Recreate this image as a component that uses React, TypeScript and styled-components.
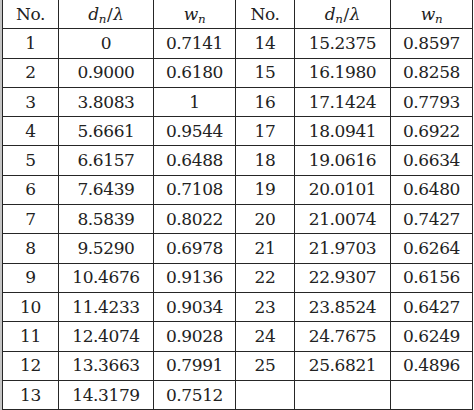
import styled, { createGlobalStyle } from 'styled-components';

const GlobalStyle = createGlobalStyle`
  html, body {
    margin: 0;
    padding: 0;
    background: #ffffff;
    overflow: hidden;
  }
`;

const Page = styled.div`
  width: 474px;
  height: 410px;
  overflow: hidden;
  box-sizing: border-box;
  border-left: 2px solid #c4c4c4;
`;

const Table = styled.table`
  border-collapse: collapse;
  table-layout: fixed;
  width: 471px;
  margin-top: -1px;
  font-family: 'DejaVu Serif', serif;
  font-size: 17px;
  letter-spacing: -0.4px;
  color: #222222;
`;

const Row = styled.tr`
  height: 29.3px;
`;

const Cell = styled.td`
  border: 1px solid #262626;
  padding: 0;
  text-align: center;
  vertical-align: middle;
  line-height: 1;
  white-space: nowrap;
`;

const Head = styled(Cell).attrs({ as: 'th' })`
  font-weight: normal;
`;

const Var = styled.i`
  font-style: italic;
`;

const Slash = styled.span`
  margin: 0 1px;
`;

const Sub = styled.sub`
  font-size: 0.7em;
  font-style: italic;
  vertical-align: -0.25em;
  line-height: 0;
`;

const widths = [56, 95, 82, 59, 96, 82];

const rows: [string, string, string][] = [
  ['1', '0', '0.7141'],
  ['2', '0.9000', '0.6180'],
  ['3', '3.8083', '1'],
  ['4', '5.6661', '0.9544'],
  ['5', '6.6157', '0.6488'],
  ['6', '7.6439', '0.7108'],
  ['7', '8.5839', '0.8022'],
  ['8', '9.5290', '0.6978'],
  ['9', '10.4676', '0.9136'],
  ['10', '11.4233', '0.9034'],
  ['11', '12.4074', '0.9028'],
  ['12', '13.3663', '0.7991'],
  ['13', '14.3179', '0.7512'],
  ['14', '15.2375', '0.8597'],
  ['15', '16.1980', '0.8258'],
  ['16', '17.1424', '0.7793'],
  ['17', '18.0941', '0.6922'],
  ['18', '19.0616', '0.6634'],
  ['19', '20.0101', '0.6480'],
  ['20', '21.0074', '0.7427'],
  ['21', '21.9703', '0.6264'],
  ['22', '22.9307', '0.6156'],
  ['23', '23.8524', '0.6427'],
  ['24', '24.7675', '0.6249'],
  ['25', '25.6821', '0.4896'],
];

function HeaderCells() {
  return (
    <>
      <Head>No.</Head>
      <Head>
        <Var>d</Var>
        <Sub>n</Sub>
        <Slash>/</Slash>
        <Var>λ</Var>
      </Head>
      <Head>
        <Var>w</Var>
        <Sub>n</Sub>
      </Head>
    </>
  );
}

export default function App() {
  const left = rows.slice(0, 13);
  const right = rows.slice(13);

  return (
    <Page>
      <GlobalStyle />
      <Table>
        <colgroup>
          {widths.map((w, i) => (
            <col key={i} style={{ width: w }} />
          ))}
        </colgroup>
        <thead>
          <Row>
            <HeaderCells />
            <HeaderCells />
          </Row>
        </thead>
        <tbody>
          {left.map((l, i) => {
            const r = right[i];
            return (
              <Row key={l[0]}>
                <Cell>{l[0]}</Cell>
                <Cell>{l[1]}</Cell>
                <Cell>{l[2]}</Cell>
                <Cell>{r ? r[0] : ''}</Cell>
                <Cell>{r ? r[1] : ''}</Cell>
                <Cell>{r ? r[2] : ''}</Cell>
              </Row>
            );
          })}
        </tbody>
      </Table>
    </Page>
  );
}
